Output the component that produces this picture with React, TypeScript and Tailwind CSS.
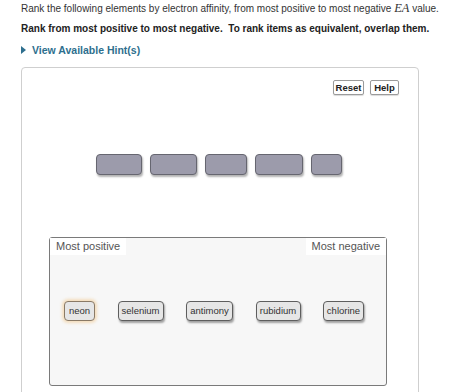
import React from 'react'

const slots = [46, 47, 42, 48, 31]

const items = [
  { label: 'neon', w: 31, active: true },
  { label: 'selenium', w: 46 },
  { label: 'antimony', w: 47 },
  { label: 'rubidium', w: 45 },
  { label: 'chlorine', w: 41 },
]

export default function App() {
  return (
    <div className="w-[474px] h-[392px] overflow-hidden bg-white pl-[21px] pt-[2px] font-['Liberation_Sans',Arial,sans-serif] text-[#333]">
      <p className="text-[10px] leading-[13px] whitespace-nowrap">
        Rank the following elements by electron affinity, from most positive to most negative{' '}
        <span className="font-['Liberation_Serif',serif] italic text-[12.5px]">EA</span> value.
      </p>
      <p className="mt-[7px] text-[10px] leading-[13px] font-bold text-[#222] whitespace-nowrap">
        Rank from most positive to most negative.&nbsp; To rank items as equivalent, overlap them.
      </p>
      <div className="mt-[9px] flex items-center gap-[6px] text-[10.5px] leading-[13px] font-bold text-[#2e6f8e]">
        <svg width="5" height="8" viewBox="0 0 5 8" className="mt-[-1px]">
          <path d="M0 0 L5 4 L0 8 Z" fill="#2e6f8e" />
        </svg>
        <span>View Available Hint(s)</span>
      </div>

      <div className="mt-[10px] w-[398px] h-[340px] border border-[#cfcfcf] rounded-[4px]">
        <div className="flex justify-end gap-[6px] pt-[12px] pr-[19px]">
          <button className="h-[15px] w-[31px] border border-[#9a9a9a] rounded-[2px] bg-white text-[9.5px] font-bold text-[#222] leading-none shadow-[0_1px_1px_rgba(0,0,0,0.15)]">
            Reset
          </button>
          <button className="h-[15px] w-[29px] border border-[#9a9a9a] rounded-[2px] bg-white text-[9.5px] font-bold text-[#222] leading-none shadow-[0_1px_1px_rgba(0,0,0,0.15)]">
            Help
          </button>
        </div>

        <div className="flex gap-[8px] pl-[74px] mt-[59px]">
          {slots.map((w, i) => (
            <div
              key={i}
              style={{ width: w }}
              className="h-[21px] bg-[#9c9bab] border-[1.5px] border-[#666670] rounded-[4px] shadow-[1px_2px_2px_rgba(0,0,0,0.3)]"
            />
          ))}
        </div>

        <div className="ml-[27px] mt-[62px] w-[338px] h-[149px] border-[1.5px] border-[#7a7a7a] rounded-[3px] bg-[#f7f7f7]">
          <div className="flex justify-between text-[11px] leading-[15px] text-[#555]">
            <span className="bg-white pl-[6px] pr-[6px] pt-[1px] pb-[1px]">Most positive</span>
            <span className="bg-white pl-[6px] pr-[6px] pt-[1px] pb-[1px]">Most negative</span>
          </div>
          <div className="flex gap-[22.5px] pl-[14px] mt-[46px]">
            {items.map((it) => (
              <div
                key={it.label}
                style={{ width: it.w }}
                className={
                  it.active
                    ? 'h-[20px] flex items-center justify-center bg-[#e6e6e6] border-[1.5px] border-[#8a7a66] rounded-[4px] text-[9.5px] text-[#333] shadow-[0_0_3px_2px_rgba(240,190,120,0.45)]'
                    : 'h-[20px] flex items-center justify-center bg-[#e6e6e6] border-[1.5px] border-[#5e5e5e] rounded-[4px] text-[9.5px] text-[#333] shadow-[1px_2px_2px_rgba(0,0,0,0.35)]'
                }
              >
                {it.label}
              </div>
            ))}
          </div>
        </div>
      </div>
    </div>
  )
}
